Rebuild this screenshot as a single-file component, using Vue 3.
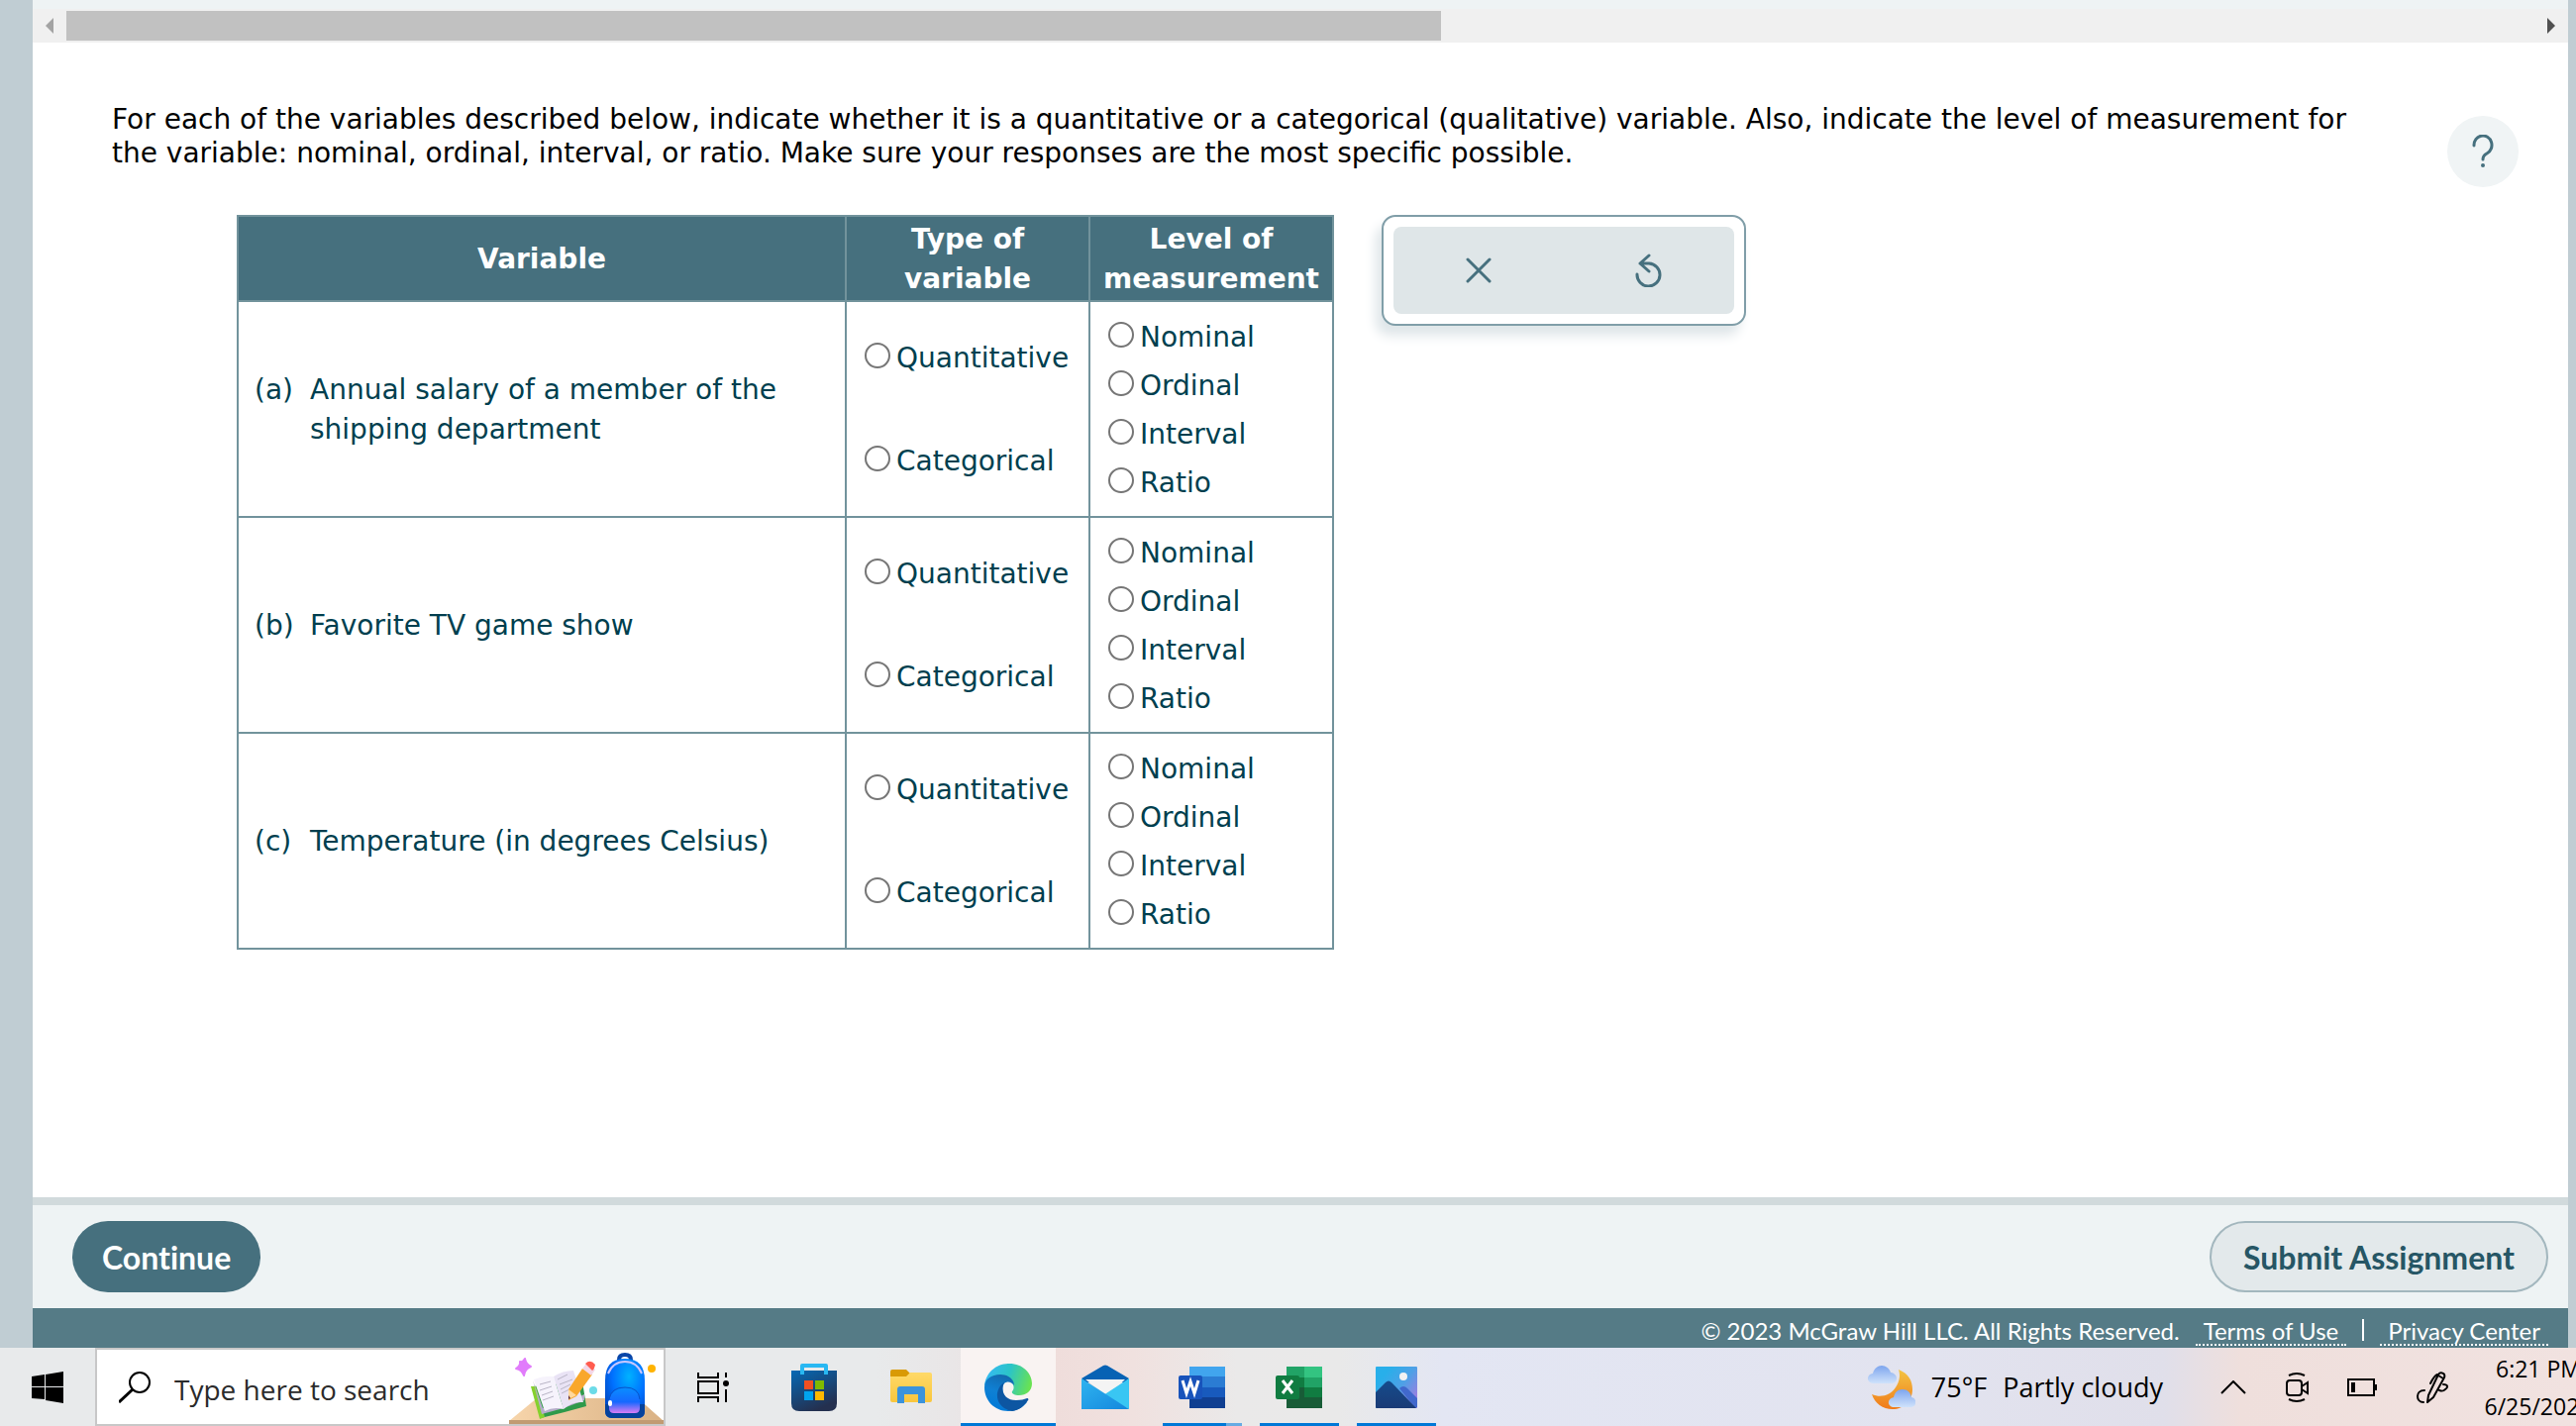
<script setup>
import { ref } from 'vue'

const rows = [
  { id: 'a', text: 'Annual salary of a member of the shipping department' },
  { id: 'b', text: 'Favorite TV game show' },
  { id: 'c', text: 'Temperature (in degrees Celsius)' }
]
const types = ['Quantitative', 'Categorical']
const levels = ['Nominal', 'Ordinal', 'Interval', 'Ratio']

const answers = ref({ a: {}, b: {}, c: {} })
function clearAnswers() {
  answers.value = { a: {}, b: {}, c: {} }
}
</script>

<template>
  <div class="screen">
    <div class="viewport">
      <main class="page">
        <div class="scrollbar">
          <button class="arrow" aria-label="Scroll left">
            <svg width="8" height="16" viewBox="0 0 8 16"><path d="M8 0v16L0 8z" fill="#a3a3a3" /></svg>
          </button>
          <div class="track"><div class="thumb"></div></div>
          <button class="arrow" aria-label="Scroll right">
            <svg width="8" height="16" viewBox="0 0 8 16"><path d="M0 0v16l8-8z" fill="#505050" /></svg>
          </button>
        </div>

        <div class="question">
          <div class="body">
            <p class="prompt">
              For each of the variables described below, indicate whether it is a quantitative or a categorical (qualitative) variable. Also, indicate the level of measurement for<br />
              the variable: nominal, ordinal, interval, or ratio. Make sure your responses are the most specific possible.
            </p>
            <div class="work">
              <table class="grid">
                <colgroup><col class="c-var" /><col class="c-opt" /><col class="c-opt" /></colgroup>
                <thead>
                  <tr>
                    <th scope="col">Variable</th>
                    <th scope="col">Type of<br />variable</th>
                    <th scope="col">Level of<br />measurement</th>
                  </tr>
                </thead>
                <tbody>
                  <tr v-for="row in rows" :key="row.id">
                    <td>
                      <div class="variable"><span class="mark">({{ row.id }})</span><span>{{ row.text }}</span></div>
                    </td>
                    <td>
                      <div class="options wide">
                        <label v-for="t in types" :key="t">
                          <input v-model="answers[row.id].type" type="radio" :name="'type-' + row.id" :value="t" /><span>{{ t }}</span>
                        </label>
                      </div>
                    </td>
                    <td>
                      <div class="options">
                        <label v-for="l in levels" :key="l">
                          <input v-model="answers[row.id].level" type="radio" :name="'level-' + row.id" :value="l" /><span>{{ l }}</span>
                        </label>
                      </div>
                    </td>
                  </tr>
                </tbody>
              </table>
              <div class="palette">
                <div class="tools">
                  <button aria-label="Clear" @click="clearAnswers">
                    <svg width="26" height="26" viewBox="0 0 26 26" fill="none" stroke="#46707e" stroke-width="3" stroke-linecap="round"><path d="M2 2l22 22M24 2L2 24" /></svg>
                  </button>
                  <button aria-label="Reset" @click="clearAnswers">
                    <svg width="28" height="34" viewBox="0 0 28 34" fill="none" stroke="#46707e" stroke-width="3" stroke-linecap="round" stroke-linejoin="round"><path d="M14 2L5 10l9 8M5 10h9a11.500 11.500 0 1 1-12 11" /></svg>
                  </button>
                </div>
              </div>
            </div>
          </div>
          <button class="help" aria-label="Help">
            <svg width="24" height="34" viewBox="0 0 24 34" fill="none" stroke="#46707e" stroke-width="3"><path d="M3 11a9 9.500 0 1 1 13 8q-4 2-4 6" stroke-linecap="round" /><circle cx="12" cy="31" r="2" fill="#46707e" stroke="none" /></svg>
          </button>
        </div>

        <div class="actions">
          <button class="pill primary">Continue</button>
          <button class="pill secondary">Submit Assignment</button>
        </div>
        <footer class="legal">
          <span class="copy">© 2023 McGraw Hill LLC. All Rights Reserved.</span>
          <a href="#terms">Terms of Use</a>
          <span class="bar"></span>
          <a href="#privacy">Privacy Center</a>
        </footer>
      </main>
    </div>

    <nav class="taskbar">
      <button class="start" aria-label="Start">
        <svg width="32" height="32" viewBox="0 0 32 32"><path d="M0 5l13-2v12H0zM14 3l18-3v15H14zM0 16h13v12L0 27zM14 16h18v16l-18-3z" /></svg>
      </button>
      <div class="search">
        <label for="search" aria-label="Search">
          <svg width="32" height="32" viewBox="0 0 32 32" fill="none" stroke="#000" stroke-width="2"><circle cx="21" cy="11" r="10" /><path d="M14 18L0 31" stroke-width="3" /></svg>
        </label>
        <input id="search" type="text" placeholder="Type here to search" />
        <svg class="doodle" width="156" height="75" viewBox="0 0 156 75">
          <defs>
            <linearGradient id="desk" x1="0" x2="1"><stop offset="0" stop-color="#f7d5ab" /><stop offset="1" stop-color="#d9b184" /></linearGradient>
            <radialGradient id="bag" cx=".6" cy=".3" r=".7"><stop offset="0" stop-color="#00b2ff" /><stop offset=".6" stop-color="#0070ff" /><stop offset="1" stop-color="#004cc8" /></radialGradient>
            <linearGradient id="pocket" x1="0" y1="0" x2="0" y2="1"><stop offset="0" stop-color="#0a8cff" /><stop offset=".55" stop-color="#1668ff" /><stop offset="1" stop-color="#d97cf5" /></linearGradient>
          </defs>
          <path d="M28 49h102l26 23H0z" fill="url(#desk)" /><path d="M0 71h156v4H0z" fill="#c19b72" />
          <path d="M24 37l8 32 24-6 22-6-4-25z" fill="#2f9a4b" /><path d="M22 37l9 33 5-2-9-31z" fill="#86d12e" />
          <path d="M24 31l9 34 22-6 21-8v-6L55 55l-21 4z" fill="#b5adc9" />
          <path d="M25 30q10-4 20-3l10 33q-10-3-19 2z" fill="#f6f3fc" /><path d="M45 27q9-6 20-6l10 32q-11-1-20 7z" fill="#e9e3f5" />
          <path d="M31 35l11-3M31 41l12-4M33 46l11-4M34 51l11-4M49 30l10-5M51 35l13-5M52 40l10-5M53 44l8-4" stroke="#b9b5c6" stroke-width="1" />
          <path d="M60 40l14-21 10 6-16 22-8 4z" fill="#f9a72b" /><path d="M60 40l8 6-8 4z" fill="#ffd89e" /><path d="M74 19l4-5 9 6-4 6z" fill="#f3d7e7" /><path d="M77 14q5-5 10 1-1 5-3 6z" fill="#ff5c4f" /><path d="M60 46l2 3-2 1z" fill="#5a2733" />
          <path d="M16 9q1 6 6 8-6 2-7 9-2-6-8-7 5-3 4-7 3 1 5-3z" fill="#e17cfb" stroke="#e17cfb" stroke-width="2" stroke-linejoin="round" />
          <circle cx="85" cy="41" r="4" fill="#6cdbe8" /><circle cx="144" cy="19" r="4" fill="#ffb300" />
          <path d="M111 14V10q0-5 6-5t6 5v5" fill="none" stroke="#0a46a8" stroke-width="4" />
          <path d="M97 31q0-22 20-22t20 22v31q0 7-7 7h-26q-7 0-7-7z" fill="url(#bag)" />
          <path d="M100 24q5-12 17-12t17 12" fill="none" stroke="#c8c7ff" stroke-width="2" />
          <path d="M97 55v7q0 7 7 7h26q7 0 7-7v-7z" fill="#06429c" />
          <path d="M101 53q1-14 16-14t15 14v6q0 5-5 5h-21q-5 0-5-5z" fill="url(#pocket)" /><path d="M101 50q2-12 16-12t15 12" fill="none" stroke="#0a52c8" stroke-width="1" /><rect x="100" y="51" width="4" height="6" rx="2" fill="#fff" />
        </svg>
      </div>

      <div class="apps">
        <button class="app tasks" aria-label="Task View">
          <svg width="32" height="30" viewBox="0 0 32 30" fill="none" stroke="#000" stroke-width="2"><path d="M1 0v5h20V0M1 9h20v12H1zM1 30v-5h20v5M29 0v5M29 17v13" /><circle cx="29" cy="11" r="3" fill="#000" stroke="none" /></svg>
        </button>
        <button class="app" aria-label="Microsoft Store">
          <svg width="46" height="48" viewBox="0 0 46 48">
            <defs><linearGradient id="store" x1="0" y1="0" x2=".5" y2="1"><stop offset="0" stop-color="#0669b5" /><stop offset="1" stop-color="#24304f" /></linearGradient></defs>
            <path d="M0 7h46v33q0 8-8 8H8q-8 0-8-8z" fill="url(#store)" /><path d="M11 11V2h24v9" fill="none" stroke="#28b8f2" stroke-width="4" stroke-linejoin="round" />
            <path d="M13 17h9v9h-9z" fill="#f25022" /><path d="M24 17h9v9h-9z" fill="#7fba00" /><path d="M13 28h9v9h-9z" fill="#00a4ef" /><path d="M24 28h9v9h-9z" fill="#ffb900" />
          </svg>
        </button>
        <button class="app" aria-label="File Explorer">
          <svg width="42" height="35" viewBox="0 0 42 35">
            <defs><linearGradient id="fold" x1="0" y1="0" x2="0" y2="1"><stop offset="0" stop-color="#ffd968" /><stop offset="1" stop-color="#f9c63d" /></linearGradient></defs>
            <path d="M0 2q0-2 2-2h14l4 4-4 5H0z" fill="#d99a05" /><path d="M0 7h16l4-4h20q2 0 2 2v26q0 2-2 2H2q-2 0-2-2z" fill="url(#fold)" />
            <path d="M7 20q0-3 3-3h22q3 0 3 3v14h-7V25H14v9H7z" fill="#3b93dc" />
          </svg>
        </button>
        <button class="app current" aria-label="Microsoft Edge">
          <svg width="48" height="48" viewBox="0 0 48 48">
            <defs>
              <linearGradient id="e1" x1="0" y1=".3" x2="1" y2=".5"><stop offset="0" stop-color="#36b9f5" /><stop offset=".5" stop-color="#2bc4c7" /><stop offset="1" stop-color="#69e252" /></linearGradient>
              <linearGradient id="e2" x1=".6" y1="0" x2=".2" y2="1"><stop offset="0" stop-color="#1366a8" /><stop offset=".5" stop-color="#0f80d4" /><stop offset="1" stop-color="#0078d7" /></linearGradient>
            </defs>
            <path d="M0 23C1 9 12 0 25 0c14 0 23 10 23 20 0 8-6 12-13 12-5 0-8-2-7-4 3-3 2-10-6-12C10 13 2 17 0 23z" fill="url(#e1)" />
            <path d="M0 24C0 16 7 11 16 11c8 0 14 5 14 11-3-4-9-5-11 0-2 6 1 16 11 18 6 1 10 0 13-1-5 6-11 9-19 9C10 48 0 37 0 24z" fill="url(#e2)" />
            <path d="M20 19c-4 7-1 18 12 18 5 0 8-1 11-2 1 0 2 1 1 2-4 6-9 10-16 11-10-2-16-9-15-18 1-6 4-9 7-11z" fill="#0d56a2" />
          </svg>
        </button>
        <button class="app" aria-label="Mail">
          <svg width="48" height="46" viewBox="0 0 48 46">
            <defs><linearGradient id="m1" x1="0" y1="0" x2="1" y2="1"><stop offset="0" stop-color="#30b4f0" /><stop offset="1" stop-color="#1387dd" /></linearGradient></defs>
            <path d="M0 14L22 1q2-1 4 0l22 13-4 4H4z" fill="#0762b4" /><path d="M4 15h40L26 32z" fill="#f4f4f4" /><path d="M48 14v31L22 31z" fill="#39c6f3" /><path d="M0 14l48 31H0z" fill="url(#m1)" />
          </svg>
        </button>
        <button class="app open stacked" aria-label="Word">
          <svg width="48" height="44" viewBox="0 0 48 44">
            <path d="M11 1h36v11H11z" fill="#41a5ee" /><path d="M11 11h36v11H11z" fill="#2b7cd3" /><path d="M11 22h36v10H11z" fill="#185abd" /><path d="M11 32h36v11H11z" fill="#103f91" />
            <rect y="10" width="24" height="24" rx="2" fill="#1853bb" /><path d="M4 15l4 13L12 16l4 12 4-13" fill="none" stroke="#fff" stroke-width="3" />
          </svg>
        </button>
        <button class="app open" aria-label="Excel">
          <svg width="48" height="44" viewBox="0 0 48 44">
            <path d="M11 1h18v11H11z" fill="#21a366" /><path d="M29 1h18v11H29z" fill="#33c481" /><path d="M11 12h18v10H11z" fill="#107c41" /><path d="M29 12h18v10H29z" fill="#21a366" /><path d="M11 22h36v10H11z" fill="#107c41" /><path d="M11 22h18v10H11zM11 32h36v11H11z" fill="#185c37" />
            <rect y="10" width="24" height="24" rx="2" fill="#107c41" /><path d="M7 15l10 13M17 15L7 28" fill="none" stroke="#fff" stroke-width="3" />
          </svg>
        </button>
        <button class="app open" aria-label="Photos">
          <svg width="42" height="42" viewBox="0 0 42 42">
            <defs>
              <linearGradient id="p1" x1=".2" y1=".2" x2="1" y2=".8"><stop offset="0" stop-color="#28afea" /><stop offset=".5" stop-color="#4fa0e6" /><stop offset="1" stop-color="#a37be0" /></linearGradient>
              <linearGradient id="p2" x1="0" y1="0" x2="0" y2="1"><stop offset="0" stop-color="#154c8c" /><stop offset="1" stop-color="#1a3b76" /></linearGradient>
            </defs>
            <rect width="42" height="42" rx="1" fill="url(#p1)" /><path d="M24 22q4-4 8 0l10 10v9l-2 1z" fill="#4168cc" /><path d="M0 26l10-10q3-3 6 0l25 26H1q-1 0-1-1z" fill="url(#p2)" /><circle cx="28" cy="10" r="4" fill="#f2f2f2" />
          </svg>
        </button>
      </div>

      <div class="tray">
        <button class="weather">
          <svg width="48" height="44" viewBox="0 0 48 44">
            <defs>
              <linearGradient id="moon" x1="0" y1="0" x2="0" y2="1"><stop offset="0" stop-color="#f3c443" /><stop offset="1" stop-color="#f07a1a" /></linearGradient>
              <linearGradient id="cloud" x1="0" y1="0" x2="0" y2="1"><stop offset="0" stop-color="#7da5ee" /><stop offset="1" stop-color="#cfe2fb" /></linearGradient>
            </defs>
            <path d="M31 4c10 4 14 11 14 20 0 12-9 20-20 20-10 0-18-6-21-15 9 4 19 1 24-7 4-6 5-12 3-18z" fill="url(#moon)" />
            <path d="M7 18c-9 0-9-9-2-10 1-5 5-8 9-8s8 3 9 7c8 1 8 11 0 11z" fill="url(#cloud)" />
            <path d="M27 42c-8 0-8-9-1-10 1-5 4-8 9-8s8 3 9 8c6 1 6 10-1 10z" fill="url(#cloud)" />
          </svg>
          <span>75°F</span><span>Partly cloudy</span>
        </button>
        <div class="status">
          <button aria-label="Show hidden icons"><svg width="26" height="14" viewBox="0 0 26 14" fill="none" stroke="#000" stroke-width="2"><path d="M1 13L13 1l12 12" /></svg></button>
          <button aria-label="Meet Now"><svg width="24" height="32" viewBox="0 0 24 32" fill="none" stroke="#000" stroke-width="2"><rect x="1" y="9" width="15" height="15" rx="3" /><path d="M16 15l6-4v11l-6-4M3 4q8-4 16 0M3 28q8 4 16 0" /></svg></button>
          <button aria-label="Battery"><svg width="30" height="18" viewBox="0 0 30 18"><path d="M1 1h26v16H1z" fill="none" stroke="#000" stroke-width="2" /><path d="M28 6h2v6h-2zM4 4h4v10H4z" /></svg></button>
          <button class="pen" aria-label="Pen"><svg width="32" height="32" viewBox="0 0 32 32" fill="none" stroke="#000" stroke-width="2" stroke-linecap="round" stroke-linejoin="round"><path d="M11 31l1-7L22 3q2-3 5-1 2 1 1 4L17 26zM22 4l5 3M21 3q-3 1-7 9M8 19c-5 0-7 3-7 6s2 6 6 6M27 13c5 0 5 3 2 5-2 2-3 2-6 1" /></svg></button>
        </div>
        <button class="clock"><span>6:21 PM</span><span>6/25/2023</span></button>
      </div>
    </nav>
  </div>
</template>

<style>
body { overflow: hidden; }
</style>

<style scoped>
.screen { display: flex; flex-direction: column; min-height: 100vh; overflow: hidden; background: #c0cdd3; }
button { border: 0; padding: 0; margin: 0; background: none; color: inherit; font: inherit; display: flex; align-items: center; justify-content: center; }
svg { display: block; flex: none; }
.viewport { flex: 1; display: flex; padding: 0 8px 0 33px; }
.page { flex: 1; min-width: 0; display: flex; flex-direction: column; background: #fff; }

.scrollbar { display: flex; height: 34px; border-top: 9px solid #eef3f4; background: #f0f0f0; }
.arrow { width: 34px; }
.track { flex: 1; padding: 2px 0; }
.thumb { width: 55.7%; height: 30px; background: #c1c1c1; }

.question { flex: 1; display: flex; align-items: flex-start; justify-content: space-between; padding: 60px 50px 0 80px; font-family: Verdana, "DejaVu Sans", sans-serif; font-size: 28px; }
.prompt { margin: 0; padding-top: 1px; line-height: 34px; white-space: nowrap; }
.work { display: flex; align-items: flex-start; gap: 48px; margin: 45px 0 0 126px; }
.grid { width: 1108px; table-layout: fixed; border-collapse: collapse; color: #003f4f; line-height: 40px; }
.c-opt { width: 246px; }
.grid th, .grid td { border: 2px solid #72939c; padding: 2px 0 0; }
.grid th { height: 82px; background: #46707e; color: #fff; }
.grid td { height: 214px; }
.variable { display: flex; gap: 12px; padding: 0 50px 0 16px; }
.mark { width: 44px; flex: none; }
.options { display: flex; flex-direction: column; gap: 9px; padding-left: 18px; }
.options.wide { gap: 64px; }
.options label { display: flex; align-items: flex-start; gap: 6px; }
.options input { appearance: none; width: 26px; height: 26px; margin: 4px 0 0; box-sizing: border-box; border: 2px solid #767676; border-radius: 50%; background: #fff; }
.options input:checked { background: #46707e; box-shadow: inset 0 0 0 4px #fff; }

.palette { padding: 10px; border: 2px solid #809ea8; border-radius: 14px; background: #fff; box-shadow: -6px 10px 12px #dfe6e9; }
.tools { display: flex; border-radius: 8px; background: #dfe6e8; }
.tools button { width: 172px; height: 88px; }
.help { width: 72px; height: 72px; margin-top: 14px; border-radius: 50%; background: #f0f4f5; }

.actions { display: flex; justify-content: space-between; padding: 16px 20px 16px 40px; border-top: 8px solid #d1dadc; background: #eef3f4; font-family: "Proxima Nova", Lato, sans-serif; }
.pill { height: 72px; padding: 0 30px; border-radius: 36px; font-size: 32px; font-weight: 700; font-variant-ligatures: none; }
.primary { background: #46707e; color: #fff; }
.secondary { padding: 0 32px; border: 2px solid #a3b7be; background: #e3e9eb; color: #265665; }
.legal { display: flex; align-items: flex-start; justify-content: flex-end; gap: 16px; height: 40px; padding-right: 20px; background: #557b86; color: #fff; font-family: "Proxima Nova", Lato, sans-serif; font-size: 24px; line-height: 46px; }
.legal a { height: 38px; box-sizing: border-box; padding: 0 8px; border-bottom: 2px dotted #fff; color: #fff; text-decoration: none; }
.bar { width: 2px; height: 22px; margin-top: 11px; background: #fff; }

.taskbar { display: flex; height: 79px; background: linear-gradient(90deg, #e8eaeb 34%, #e9e6e7 37%, #efdddb 41%, #f0e1df 44%, #eae9e9 48%, #e9e9e9 52%, #e3e6f3 56%, #e2e3ef 75%, #e0dfea 84%, #efdfdc 87%, #f1e2e0 100%); color: #000; font-family: "Segoe UI", "Open Sans", sans-serif; font-size: 28px; }
.start { width: 96px; }
.search { display: flex; align-items: center; width: 576px; box-sizing: border-box; border: 2px solid #c8c8c8; background: #fff; }
.search label { padding-left: 22px; }
.search input { flex: 1; min-width: 0; padding: 4px 0 0 24px; border: 0; outline: 0; background: none; font: inherit; }
.search input::placeholder { color: #2b2b2b; opacity: 1; }
.doodle { align-self: flex-end; }
.apps { display: flex; gap: 2px; }
.app { position: relative; width: 96px; }
.app.tasks { margin-right: 4px; }
.app.current { background: #f9f3f2; }
.app.current::after, .app.open::after { content: ""; position: absolute; bottom: 0; left: 0; right: 0; height: 3px; background: #0078d7; }
.app.open::after { left: 8px; right: 8px; }
.app.stacked::after { background: linear-gradient(90deg, #0078d7 80%, #66abe3 80%); }
.tray { display: flex; margin-left: auto; }
.weather { gap: 16px; margin-right: 42px; font-size: 27px; white-space: nowrap; }
.status { display: flex; gap: 8px; margin-right: 19px; }
.status button { width: 57px; }
.status .pen { margin-left: 6px; }
.clock { flex-direction: column; width: 120px; margin-right: -22px; font-size: 23px; line-height: 38px; white-space: nowrap; }
</style>
